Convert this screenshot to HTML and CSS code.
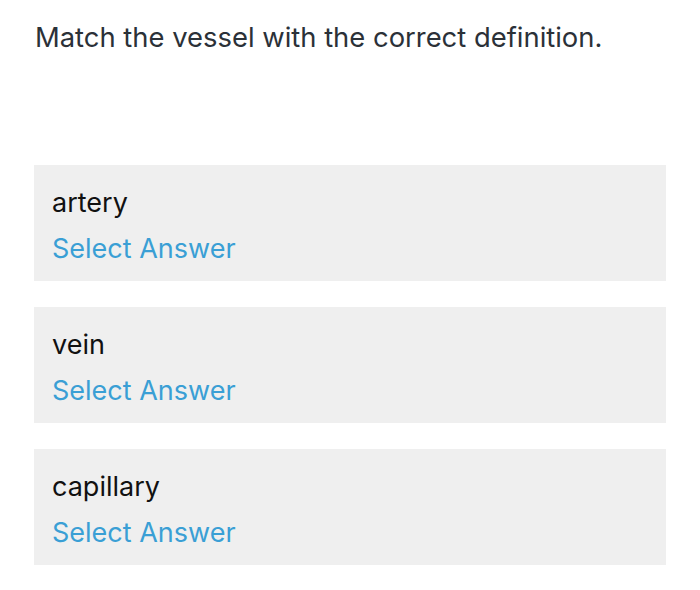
FILE: index.html
```html
<!DOCTYPE html>
<html>
<head>
<meta charset="utf-8">
<link rel="stylesheet" href="styles.css">
</head>
<body>
<div class="page">
  <h1 class="title">Match the vessel with the correct definition.</h1>
  <div class="list">
    <div class="item">
      <div class="term">artery</div>
      <div class="answer">Select Answer</div>
    </div>
    <div class="item">
      <div class="term">vein</div>
      <div class="answer">Select Answer</div>
    </div>
    <div class="item">
      <div class="term">capillary</div>
      <div class="answer">Select Answer</div>
    </div>
  </div>
</div>
</body>
</html>
```
FILE: styles.css
```css
html, body {
  margin: 0;
  padding: 0;
  background: #ffffff;
}
body {
  font-family: Inter, "Liberation Sans", Arial, sans-serif;
}
.page {
  padding: 19px 34px 0 34px;
}
.title {
  margin: 0 0 0 1px;
  font-weight: normal;
  font-size: 27.4px;
  line-height: 36px;
  color: #2b3138;
}
.list {
  margin-top: 110px;
  display: flex;
  flex-direction: column;
  gap: 26px;
}
.item {
  background: #efefef;
  height: 116px;
  box-sizing: border-box;
  padding: 22px 18px 0 18px;
  width: 632px;
}
.term {
  font-size: 27px;
  line-height: 32px;
  color: #111111;
}
.answer {
  margin-top: 14px;
  font-size: 27px;
  line-height: 32px;
  color: #3a9fd5;
}
```
